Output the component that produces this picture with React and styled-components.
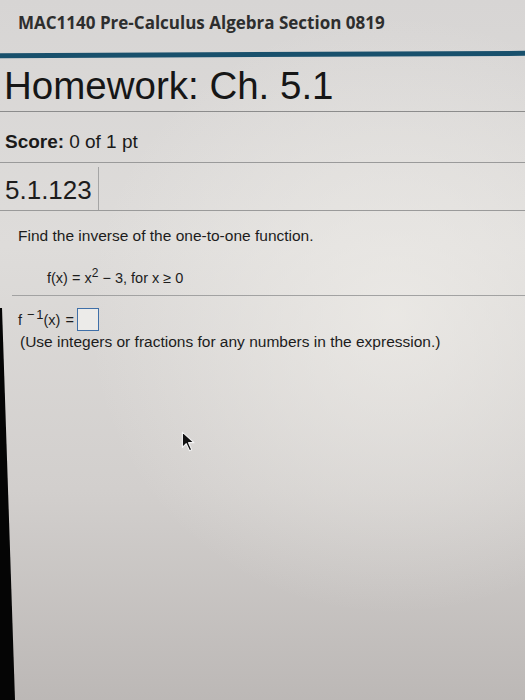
import React from "react";
import styled, { createGlobalStyle } from "styled-components";

const GlobalStyle = createGlobalStyle`
  html, body {
    margin: 0;
    padding: 0;
  }
  body {
    font-family: "Liberation Sans", Arial, sans-serif;
    color: #1e1e1e;
  }
`;

function App() {
  return (
    <Page>
      <GlobalStyle />
      <CourseHeader>MAC1140 Pre-Calculus Algebra Section 0819</CourseHeader>
      <AccentRule />
      <HomeworkTitle>Homework: Ch. 5.1</HomeworkTitle>
      <ScoreRow>
        <b>Score:</b> 0 of 1 pt
      </ScoreRow>
      <QuestionBar>
        <QuestionNumber>5.1.123</QuestionNumber>
      </QuestionBar>
      <QuestionBody>
        <Prompt>Find the inverse of the one-to-one function.</Prompt>
        <Formula>
          f(x) = x<sup>2</sup> − 3, for x ≥ 0
        </Formula>
        <Divider />
        <AnswerLine>
          <span>
            f <sup>− 1</sup>(x) =
          </span>
          <AnswerBox />
        </AnswerLine>
        <Hint>(Use integers or fractions for any numbers in the expression.)</Hint>
        <CursorArea>
          <svg width="16" height="22" viewBox="0 0 14 20">
            <path
              d="M1 1 L1 15 L4.5 11.5 L7.5 18 L9.5 17 L6.6 10.6 L11.5 10.6 Z"
              fill="#111"
              stroke="#f4f4f4"
              strokeWidth="1"
              strokeLinejoin="round"
            />
          </svg>
        </CursorArea>
      </QuestionBody>
      <ScreenEdge />
    </Page>
  );
}

const Page = styled.div`
  position: relative;
  height: 100vh;
  min-height: 700px;
  overflow: hidden;
  background:
    radial-gradient(ellipse at 75% 45%, rgba(240, 238, 234, 0.7) 0%, rgba(240, 238, 234, 0) 55%),
    linear-gradient(to bottom, #d7d5d4 0%, #dedcda 35%, #d2cfcd 70%, #bcb8b6 100%);
`;

const ScreenEdge = styled.div`
  position: absolute;
  left: 0;
  top: 0;
  width: 18px;
  height: 100%;
  background: #050505;
  clip-path: polygon(0 44%, 2px 44%, 15px 100%, 0 100%);
`;

const CourseHeader = styled.div`
  height: 52px;
  box-sizing: border-box;
  padding: 11px 0 0 18px;
  font-family: "Open Sans", "Liberation Sans", sans-serif;
  font-weight: 700;
  font-size: 17px;
  color: #2e2e2e;
`;

const AccentRule = styled.div`
  height: 5px;
  background: #18506c;
  transform: rotate(-0.25deg);
`;

const HomeworkTitle = styled.h1`
  margin: 0;
  height: 55px;
  box-sizing: border-box;
  padding: 9px 0 0 4px;
  font-weight: 400;
  font-size: 38.5px;
  line-height: 40px;
  color: #161616;
  border-bottom: 1px solid #8c8c8c;
`;

const ScoreRow = styled.div`
  height: 51px;
  box-sizing: border-box;
  display: flex;
  align-items: center;
  gap: 5px;
  padding: 9px 0 0 5px;
  font-size: 19px;
  color: #1a1a1a;
  border-bottom: 1px solid #9a9a9a;
`;

const QuestionBar = styled.div`
  height: 47px;
  display: flex;
  border-bottom: 1px solid #9a9a9a;
`;

const QuestionNumber = styled.div`
  display: flex;
  align-items: center;
  padding: 4px 6px 0 5px;
  margin-top: 4px;
  font-size: 26px;
  color: #1c1c1c;
  border-right: 1px solid #a5a5a5;
`;

const QuestionBody = styled.div`
  position: relative;
  padding: 16px 0 0 12px;
  font-size: 15.5px;
  color: #1c1c1c;

  sup {
    font-size: 12px;
    line-height: 0;
  }
`;

const Prompt = styled.p`
  margin: 0 0 0 6px;
`;

const Formula = styled.p`
  margin: 25px 0 0 35px;
  font-size: 14.5px;
`;

const Divider = styled.div`
  height: 1px;
  margin-top: 9px;
  background: #a2a2a2;
`;

const AnswerLine = styled.div`
  display: flex;
  align-items: center;
  gap: 3px;
  margin: 12px 0 0 6px;
  font-size: 14.5px;
  word-spacing: 1px;

  sup {
    font-size: 13px;
    word-spacing: -2px;
    vertical-align: 6px;
  }
`;

const AnswerBox = styled.div`
  width: 20px;
  height: 21px;
  border: 1px solid #3f6fa8;
  background: #ecebe9;
`;

const Hint = styled.p`
  margin: 2px 0 0 8px;
  font-size: 15.5px;
`;

const CursorArea = styled.div`
  position: absolute;
  left: 181px;
  top: 220px;
`;

export default App;
